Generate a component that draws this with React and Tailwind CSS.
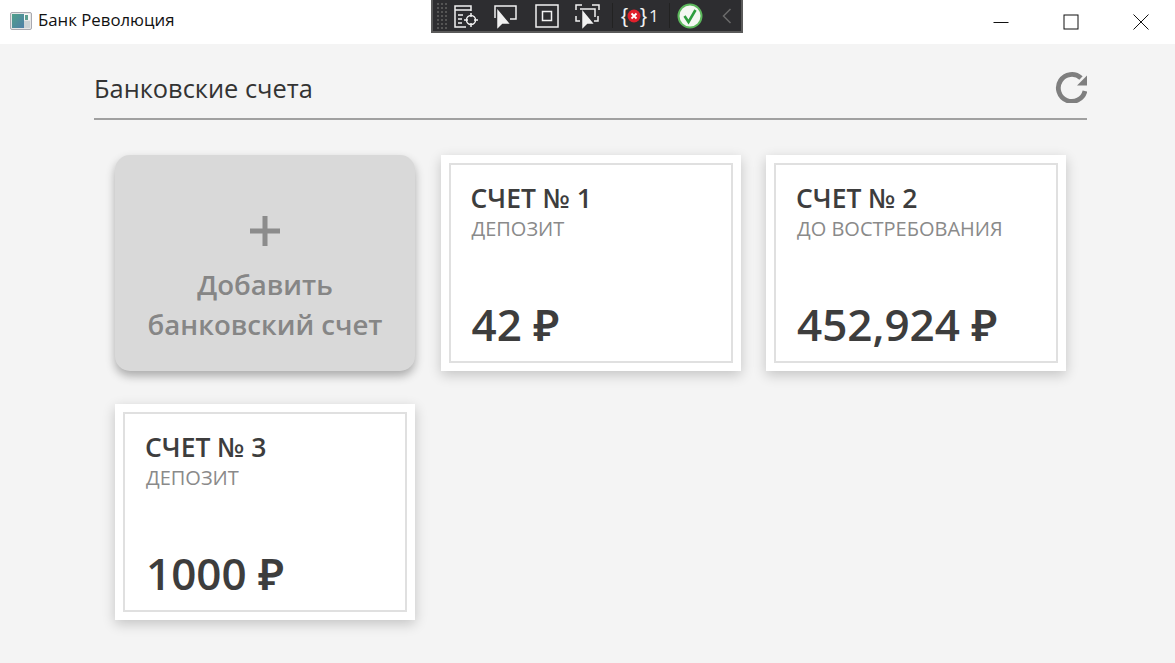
const FONT = "font-['Open_Sans','Noto_Sans',sans-serif]";

const ACCOUNTS = [
  { title: "СЧЕТ № 1", kind: "ДЕПОЗИТ", amount: "42 ₽" },
  { title: "СЧЕТ № 2", kind: "ДО ВОСТРЕБОВАНИЯ", amount: "452,924 ₽" },
  { title: "СЧЕТ № 3", kind: "ДЕПОЗИТ", amount: "1000 ₽" },
];

const AppIcon = () => (
  <svg width="22" height="18" viewBox="0 0 22 18" className="shrink-0">
    <defs>
      <linearGradient id="appfill" x1="0" y1="0" x2="1" y2="1">
        <stop offset="0" stopColor="#4fa08a" />
        <stop offset="1" stopColor="#4f7fa8" />
      </linearGradient>
    </defs>
    <rect x="0.5" y="0.5" width="21" height="17" rx="1.5" fill="#e6e6e6" stroke="#a9a9b0" />
    <rect x="2" y="2" width="12" height="14" fill="url(#appfill)" />
    <rect x="14" y="2" width="6" height="6" fill="#f7f7f7" />
    <rect x="15" y="3" width="3" height="5" fill="#5f9f90" />
    <rect x="14" y="9" width="6" height="7" fill="#ccd3d6" />
  </svg>
);

const Toolbar = () => (
  <div className="absolute left-[431px] top-0 flex h-[33px] w-[312px] items-center border-2 border-t-0 border-[#5a5a5a] bg-[#2d2d30]">
    <div className="ml-[3px] h-[27px] w-[12px] bg-[radial-gradient(#555_1px,transparent_1px)] bg-[length:4px_4px]" />
    <svg width="28" height="26" viewBox="0 0 28 26" className="ml-[5px]" fill="none" stroke="#f1f1f1" strokeWidth="1.5">
      <path d="M18 8V3H2v21h11M2 7h16M5 12h5M5 16h4M5 20h4" />
      <circle cx="18" cy="17" r="4.5" />
      <path d="M18 10v4M18 20v4M11 17h4M21 17h4" />
    </svg>
    <svg width="26" height="26" viewBox="0 0 26 26" className="ml-[11px]" fill="none" stroke="#f1f1f1" strokeWidth="1.5">
      <path d="M3 15V3h21v13h-6" />
      <path d="M6 8l0 16 4-4 6 0z" fill="#f1f1f1" />
    </svg>
    <svg width="24" height="24" viewBox="0 0 24 24" className="ml-[17px]" fill="none" stroke="#f1f1f1" strokeWidth="1.5">
      <rect x="1" y="1" width="22" height="22" />
      <rect x="7.5" y="7.5" width="9" height="9" />
    </svg>
    <svg width="28" height="26" viewBox="0 0 28 26" className="ml-[15px]" fill="none" stroke="#f1f1f1" strokeWidth="1.5">
      <path d="M2 7V2h6M18 2h7v5M2 13v5h4M24 13v5h-4M6 6h15v8" />
      <path d="M9 9l0 15 4-4 5 0z" fill="#f1f1f1" />
    </svg>
    <div className="ml-[10px] h-[25px] w-px bg-[#222]" />
    <div className="relative ml-[8px] flex w-[26px] items-center justify-between">
      <span className="font-['Liberation_Sans',sans-serif] text-[21px] leading-none text-[#f1f1f1]">{"{"}</span>
      <span className="font-['Liberation_Sans',sans-serif] text-[21px] leading-none text-[#f1f1f1]">{"}"}</span>
      <svg width="14" height="14" viewBox="0 0 14 14" className="absolute left-[6px] top-[4px]">
        <circle cx="7" cy="7" r="6.5" fill="#e0202c" />
        <path d="M4.500 4.500l5 5M9.500 4.500l-5 5" stroke="#fff" strokeWidth="1.8" />
      </svg>
    </div>
    <span className={`${FONT} ml-[2px] text-[17px] leading-none text-[#f1f1f1]`}>1</span>
    <div className="ml-[10px] h-[25px] w-px bg-[#222]" />
    <svg width="26" height="26" viewBox="0 0 26 26" className="ml-[7px]" fill="none">
      <circle cx="13" cy="13" r="11.5" fill="#f4f8f2" stroke="#5cb85c" strokeWidth="2" />
      <path d="M7.500 13l4 6 7-12" stroke="#2e9e3e" strokeWidth="2.6" />
    </svg>
    <svg width="10" height="16" viewBox="0 0 10 16" className="ml-[19px]" fill="none" stroke="#6a6a6a" strokeWidth="1.5">
      <path d="M8.500 1L1.500 8l7 7" />
    </svg>
  </div>
);

const TitleBar = () => (
  <div className="relative flex h-[44px] items-center bg-white">
    <div className="ml-[10px] mb-[3px] flex items-center gap-[6px]">
      <AppIcon />
      <span className={`${FONT} text-[16.8px] leading-none text-[#111]`}>Банк Революция</span>
    </div>
    <Toolbar />
    <div className="ml-auto flex h-full items-center">
      <svg width="70" height="16" viewBox="0 0 16 16" fill="none" stroke="#111">
        <path d="M0.500 8.500h15" />
      </svg>
      <svg width="70" height="16" viewBox="0 0 16 16" fill="none" stroke="#111">
        <rect x="1" y="1" width="14" height="14" />
      </svg>
      <svg width="70" height="16" viewBox="0 0 16 16" className="mr-[-1px]" fill="none" stroke="#111">
        <path d="M0.500 0.500l15 15M15.500 0.500l-15 15" />
      </svg>
    </div>
  </div>
);

const AddCard = () => (
  <div className="flex h-[216px] flex-col items-center rounded-[15px] bg-[#d9d9d9] pt-[61px] shadow-[0_5px_10px_rgba(0,0,0,0.3)]">
    <svg width="30" height="30" viewBox="0 0 30 30" fill="#8c8c8c">
      <path d="M12.500 0h5v12.500H30v5H17.500V30h-5V17.500H0v-5h12.500z" />
    </svg>
    <div className="mt-[18px] text-center text-[27.6px] leading-[40px] font-semibold text-[#868686]">
      Добавить
      <br />
      банковский счет
    </div>
  </div>
);

const AccountCard = ({ account }) => (
  <div className="h-[216px] bg-white p-2 shadow-[0_4px_12px_rgba(0,0,0,0.2)]">
    <div className="flex h-full flex-col border-2 border-[#e0e0e0] pl-[20px] pr-[10px]">
      <div className="mt-[17px] text-[26.5px] leading-[32px] font-semibold text-[#3d3d3d]">{account.title}</div>
      <div className="mt-[2px] ml-px text-[20px] leading-[26px] text-[#8a8a8a]">{account.kind}</div>
      <div className="mt-auto mb-[9px] ml-px text-[44px] leading-[56px] font-semibold text-[#3d3d3d]">{account.amount}</div>
    </div>
  </div>
);

export default function App() {
  return (
    <div className={`${FONT} h-[663px] overflow-hidden bg-[#f4f4f4]`}>
      <TitleBar />
      <div className="ml-[94px] mr-[88px] mt-[26px] flex h-[50px] items-center justify-between border-b-2 border-[#a0a0a0] pb-[10px]">
        <h1 className="text-[25.4px] leading-none font-normal text-[#333]">Банковские счета</h1>
        <svg width="32" height="32" viewBox="0 0 32 32" fill="none" className="mt-[-4px]">
          <path d="M26 7A13.500 13.500 0 1 0 30 20" stroke="#7f7f7f" strokeWidth="4.800" />
          <path d="M32 4.500v10H22z" fill="#7f7f7f" />
        </svg>
      </div>
      <div className="ml-[115px] mt-[35px] grid w-[951px] grid-cols-[300px_300px_300px] gap-x-[25.5px] gap-y-[33px]">
        <AddCard />
        {ACCOUNTS.map((account) => (
          <AccountCard key={account.title} account={account} />
        ))}
      </div>
    </div>
  );
}
